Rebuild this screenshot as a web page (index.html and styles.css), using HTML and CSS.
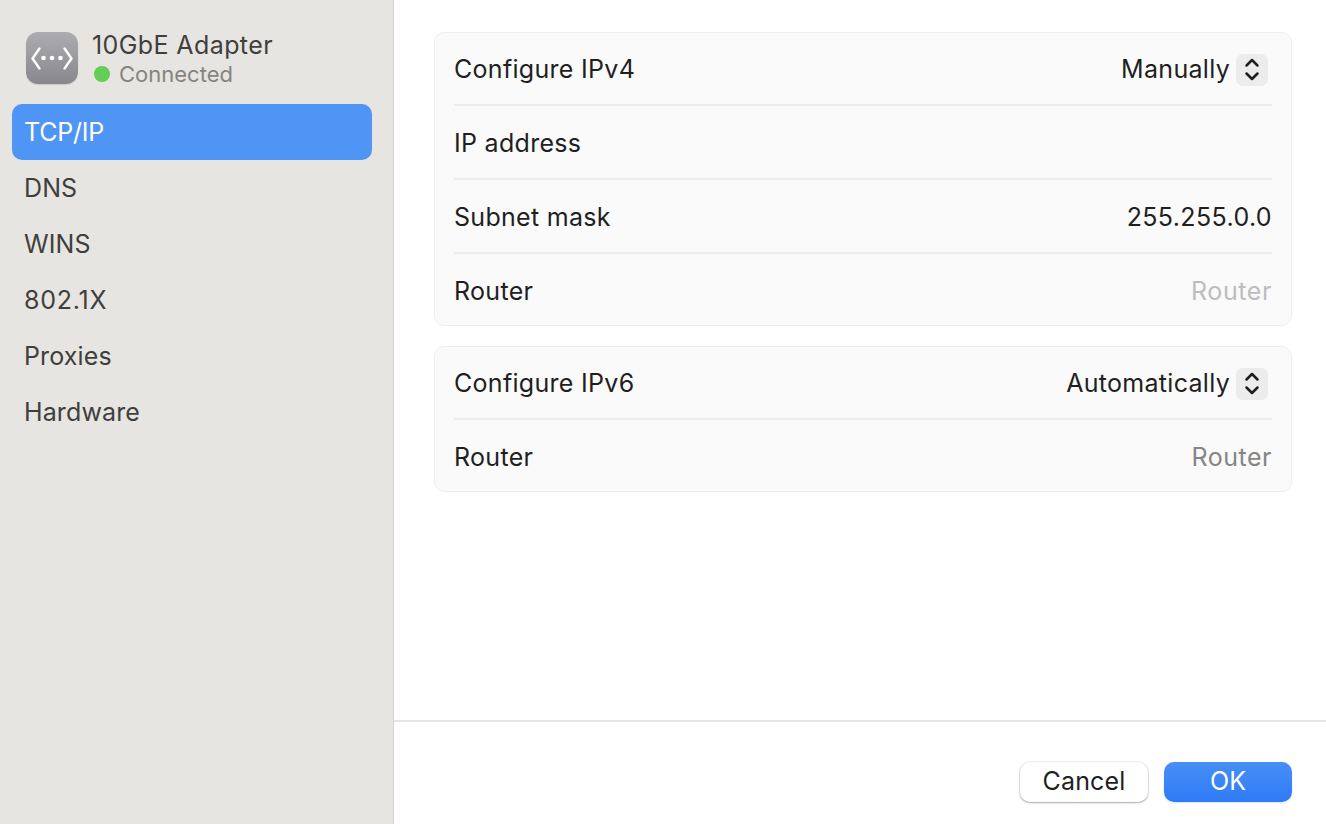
FILE: index.html
```html
<!DOCTYPE html>
<html lang="en">
<head>
<meta charset="utf-8">
<title>10GbE Adapter</title>
<link rel="stylesheet" href="styles.css">
</head>
<body>
<div class="window">
  <aside class="sidebar">
    <header class="adapter">
      <div class="adapter-icon">
        <svg width="52" height="52" viewBox="0 0 52 52" fill="none">
          <path d="M13.500 16.500 6.500 26.500l7 10M38.500 16.500l7 10-7 10" stroke="#fff" stroke-width="2.400" stroke-linecap="round" stroke-linejoin="round"/>
          <circle cx="17.500" cy="26" r="2.300" fill="#fff"/>
          <circle cx="26" cy="26" r="2.300" fill="#fff"/>
          <circle cx="34.500" cy="26" r="2.300" fill="#fff"/>
        </svg>
      </div>
      <div class="adapter-text">
        <div class="adapter-name">10GbE Adapter</div>
        <div class="adapter-status"><span class="dot"></span><span>Connected</span></div>
      </div>
    </header>
    <nav class="nav">
      <div class="nav-item active">TCP/IP</div>
      <div class="nav-item">DNS</div>
      <div class="nav-item">WINS</div>
      <div class="nav-item numeric">802.1X</div>
      <div class="nav-item">Proxies</div>
      <div class="nav-item">Hardware</div>
    </nav>
  </aside>
  <main class="main">
    <div class="content">
      <section class="card">
        <div class="row">
          <span>Configure IPv4</span>
          <span class="select">Manually
            <span class="stepper"><svg width="16" height="24" viewBox="0 0 16 24" fill="none"><path d="M2.500 7.500 8 2l5.500 5.500M2.500 15.500 8 21l5.500-5.500" stroke="#1f1f1f" stroke-width="2.500" stroke-linecap="round" stroke-linejoin="round"/></svg></span>
          </span>
        </div>
        <div class="row"><span>IP address</span></div>
        <div class="row"><span>Subnet mask</span><span class="value">255.255.0.0</span></div>
        <div class="row"><span>Router</span><span class="placeholder">Router</span></div>
      </section>
      <section class="card">
        <div class="row">
          <span>Configure IPv6</span>
          <span class="select">Automatically
            <span class="stepper"><svg width="16" height="24" viewBox="0 0 16 24" fill="none"><path d="M2.500 7.500 8 2l5.500 5.500M2.500 15.500 8 21l5.500-5.500" stroke="#1f1f1f" stroke-width="2.500" stroke-linecap="round" stroke-linejoin="round"/></svg></span>
          </span>
        </div>
        <div class="row"><span>Router</span><span class="muted">Router</span></div>
      </section>
    </div>
    <footer class="footer">
      <button class="btn btn-cancel">Cancel</button>
      <button class="btn btn-ok">OK</button>
    </footer>
  </main>
</div>
</body>
</html>
```
FILE: styles.css
```css
* { box-sizing: border-box; }
html, body { margin: 0; height: 100%; background: #fff; overflow: hidden; }
body { font-family: Inter, "Liberation Sans", sans-serif; font-size: 25px; color: #1f1f1f; }
.window { display: flex; height: 824px; }
.sidebar { width: 394px; flex: none; background: #e6e5e1; border-right: 1px solid #d3d3d1; padding: 28px 21px 0 12px; }
.adapter { display: flex; align-items: center; gap: 14px; padding-left: 14px; height: 60px; margin-bottom: 16px; }
.adapter-icon { width: 52px; height: 52px; border-radius: 12px; background: linear-gradient(#adacb0, #88878b); box-shadow: 0 1px 1px rgba(0,0,0,.12); flex: none; }
.adapter-icon svg { display: block; }
.adapter-name { color: #403f3c; line-height: 30px; letter-spacing: .4px; padding-top: 1px; }
.adapter-status { display: flex; align-items: center; gap: 9px; padding-left: 2px; color: #85847f; font-size: 22px; line-height: 28px; }
.dot { width: 16px; height: 16px; border-radius: 50%; background: #62cd57; margin-top: 1px; }
.nav-item { height: 56px; display: flex; align-items: center; padding-left: 12px; color: #403f3c; letter-spacing: .12px; }
.nav-item.active { background: #4f95f5; color: #fff; border-radius: 10px; letter-spacing: -.2px; }
.nav-item.numeric { letter-spacing: .75px; }
.main { flex: 1; display: flex; flex-direction: column; }
.content { flex: 1; padding: 32px 34px 0 40px; display: flex; flex-direction: column; gap: 20px; }
.card { background: #fafafa; border: 1px solid #eeeeee; border-radius: 10px; padding: 0 19px; }
.row { height: 74px; padding-top: 1px; display: flex; align-items: center; justify-content: space-between; border-top: 2px solid #ececec; letter-spacing: .3px; }
.row:first-child { height: 71px; padding-top: 0; border-top: 0; }
.row:last-child { height: 73px; padding-top: 2px; }
.value { letter-spacing: .38px; }
.select { display: flex; align-items: center; gap: 6px; }
.stepper { width: 32px; height: 32px; margin: 2px 4px 0 0; background: #ececec; border-radius: 7px; display: flex; align-items: center; justify-content: center; }
.stepper svg { display: block; }
.placeholder { color: #bdbdbd; letter-spacing: .6px; }
.muted { color: #858585; letter-spacing: .5px; }
.footer { height: 104px; border-top: 2px solid #e6e6e6; display: flex; justify-content: flex-end; gap: 16px; padding: 40px 34px 0 0; }
.btn { width: 128px; height: 40px; border: 0; border-radius: 10px; font: inherit; letter-spacing: .15px; padding: 0 0 2px; }
.btn-cancel { background: #fff; color: #1f1f1f; box-shadow: 0 0 0 1px rgba(0,0,0,.06), 0 1px 2px rgba(0,0,0,.3); }
.btn-ok { background: linear-gradient(#468ff7, #2f7bf6); color: #fff; box-shadow: 0 1px 2px rgba(47,123,246,.2); }
```
